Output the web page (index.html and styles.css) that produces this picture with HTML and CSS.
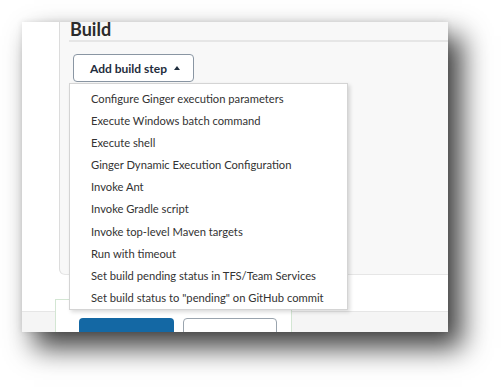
FILE: index.html
```html
<!DOCTYPE html>
<html lang="en">
<head>
<meta charset="UTF-8">
<meta name="viewport" content="width=device-width, initial-scale=1.0">
<link rel="stylesheet" href="styles.css">
</head>
<body>

<div class="shot">
    <div class="top">
        <div class="side"></div>
        <div class="panel">
            <h2>Build</h2>
            <div class="rule"></div>
            <button class="add-btn">Add build step <span class="caret"></span></button>
        </div>
    </div>
    <div class="foot">
        <div class="sticker">
            <button class="save-btn"></button>
            <button class="apply-btn"></button>
        </div>
    </div>

    <ul class="menu">
        <li>Configure Ginger execution parameters</li>
        <li>Execute Windows batch command</li>
        <li>Execute shell</li>
        <li>Ginger Dynamic Execution Configuration</li>
        <li>Invoke Ant</li>
        <li>Invoke Gradle script</li>
        <li>Invoke top-level Maven targets</li>
        <li>Run with timeout</li>
        <li>Set build pending status in TFS/Team Services</li>
        <li>Set build status to "pending" on GitHub commit</li>
    </ul>
</div>

</body>
</html>
```

FILE: styles.css
```css
html, body {
    height: 100%;
}

body {
    margin: 0;
    min-height: 387px;
    background: #fff;
    font-family: Lato, "Liberation Sans", sans-serif;
    color: #333;
}

.shot {
    position: relative;
    width: 426px;
    height: 310px;
    margin: 0 0 0 22px;
    top: 22px;
    background: #fff;
    overflow: hidden;
    box-shadow: 13px 15px 26px 1px rgba(0,0,0,0.75), 0 0 6px rgba(0,0,0,0.1);
}

.top {
    display: flex;
    height: 253px;
}

.side {
    width: 37px;
    background: #fff;
}

.panel {
    flex: 1;
    background: #f8f8f8;
    border-left: 1px solid #dcdcdc;
    border-bottom: 1px solid #e6e6e6;
    border-bottom-left-radius: 6px;
    padding-left: 9px;
}

.panel h2 {
    margin: 0 0 0 1px;
    font-size: 18px;
    font-weight: 700;
    line-height: 14px;
    color: #2b2b2b;
}

.rule {
    height: 2px;
    margin-top: 4px;
    background: #e6e6e6;
}

.add-btn {
    display: flex;
    align-items: center;
    gap: 7px;
    margin: 12px 0 0 4px;
    width: 121px;
    height: 28px;
    padding: 0 0 0 16px;
    background: #fff;
    border: 1.5px solid #8a96a3;
    border-radius: 4px;
    font-family: Lato, "Liberation Sans", sans-serif;
    font-size: 12px;
    font-weight: 700;
    color: #1f2d3d;
}

.caret {
    width: 0;
    height: 0;
    border-left: 3px solid transparent;
    border-right: 3px solid transparent;
    border-bottom: 4px solid #1f2d3d;
}

.foot {
    height: 57px;
    padding: 24px 0 0 33px;
    box-sizing: border-box;
    background: linear-gradient(to bottom, #fff 36px, #e6e6e6 36px, #e6e6e6 37px, #f5f5f5 37px);
}

.sticker {
    display: flex;
    gap: 9px;
    width: 237px;
    height: 33px;
    box-sizing: border-box;
    padding: 18px 0 0 23px;
    background: #fff;
    border: 1px solid #d3e6d3;
    border-bottom: none;
}

.save-btn {
    width: 95px;
    height: 22px;
    background: #1468a4;
    border: none;
    border-radius: 4px;
}

.apply-btn {
    width: 94px;
    height: 22px;
    background: #fff;
    border: 1px solid #9aa4ae;
    border-radius: 4px;
}

.menu {
    position: absolute;
    left: 47px;
    top: 61px;
    width: 279px;
    height: 227px;
    box-sizing: border-box;
    margin: 0;
    padding: 4px 0 2px;
    list-style: none;
    background: #fff;
    border: 1px solid #d4d4d4;
    box-shadow: 2px 2px 4px rgba(0,0,0,0.15);
}

.menu li {
    height: 22.1px;
    line-height: 22px;
    padding-left: 21px;
    font-size: 11.2px;
    color: #333;
    white-space: nowrap;
}
```
